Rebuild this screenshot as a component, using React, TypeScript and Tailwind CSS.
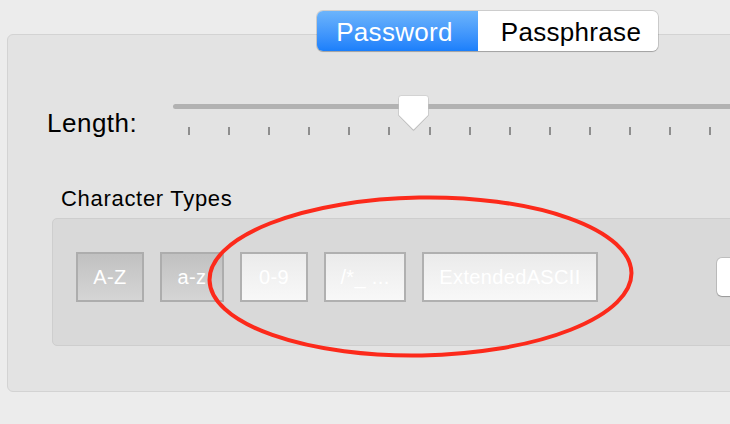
export default function App() {
  const ticks = Array.from({ length: 14 });
  const dark =
    "flex h-[50px] items-center justify-center border-2 border-[#adadad] bg-gradient-to-b from-[#c1c1c1] to-[#d5d5d5] text-[20px] leading-[24px] tracking-[0.35px] text-white";
  const light =
    "flex h-[50px] items-center justify-center border-2 border-[#b0b0b0] bg-gradient-to-b from-[#ebebeb] to-[#f8f8f8] text-[20px] leading-[24px] tracking-[0.35px] text-white";
  return (
    <div className="relative h-[424px] w-[730px] overflow-hidden bg-[#ececec] font-['Liberation_Sans',Arial,sans-serif] text-black">
      <div className="pt-[11px]">
        <div className="relative z-10 ml-[317px] flex h-[40px] w-[341px] rounded-[6px] shadow-[0_0_0_1px_rgba(0,0,0,0.13),0_1px_1px_rgba(0,0,0,0.18)]">
          <div className="w-[161px] rounded-l-[6px] bg-gradient-to-b from-[#6cb4fb] to-[#1a7ffb] pr-[6px] pt-[5px] text-center text-[26px] leading-[33px] tracking-[0.3px] text-white">
            Password
          </div>
          <div className="flex-1 rounded-r-[6px] bg-white pl-[6px] pt-[5px] text-center text-[26px] leading-[33px] tracking-[0.3px]">
            Passphrase
          </div>
        </div>
        <div className="-mt-[17px] ml-[7px] h-[358px] w-[780px] rounded-[6px] border border-[#d3d3d3] bg-[#e3e3e3]">
          <div className="mt-[69px] flex">
            <div className="w-[165px] pl-[39px] pt-[4px] text-[26px] leading-[30px] tracking-[0.5px]">Length:</div>
            <div className="relative flex-1">
              <div className="h-[5px] rounded-full bg-[#b2b2b2]" />
              <div className="mt-[18px] flex gap-[38.1px] pl-[15px]">
                {ticks.map((_, i) => (
                  <div key={i} className="h-[8px] w-[2px] bg-[#8e8e8e]" />
                ))}
              </div>
              <svg
                className="absolute left-[224px] top-[-10px]"
                width="33"
                height="38"
                viewBox="-1 -1 33 38"
              >
                <path
                  d="M3.5 0.5 H27.5 Q30.5 0.5 30.5 3.5 V20 L15.5 35.5 L0.5 20 V3.5 Q0.5 0.5 3.5 0.5 Z"
                  fill="#000"
                  opacity="0.12"
                  transform="translate(0 0.8)"
                />
                <path
                  d="M3.5 0.5 H27.5 Q30.5 0.5 30.5 3.5 V20 L15.5 35 L0.5 20 V3.5 Q0.5 0.5 3.5 0.5 Z"
                  fill="#ffffff"
                  stroke="rgba(0,0,0,0.12)"
                  strokeWidth="1"
                />
              </svg>
            </div>
          </div>
          <div className="ml-[53px] mt-[48px] text-[22px] leading-[26px] tracking-[0.7px]">
            Character Types
          </div>
          <div className="ml-[44px] mt-[6px] flex h-[128px] items-start gap-[16px] rounded-[5px] border border-[#cecece] bg-[#d9d9d9] pl-[23px] pt-[33px]">
            <div className={`${dark} w-[68px]`}>A-Z</div>
            <div className={`${dark} w-[64px]`}>a-z</div>
            <div className={`${light} w-[68px]`}>0-9</div>
            <div className={`${light} w-[82px]`}>/*_ ...</div>
            <div className={`${light} w-[176px]`}>ExtendedASCII</div>
            <div className="ml-[103px] mt-[6px] h-[38px] w-[60px] rounded-[5px] bg-white shadow-[0_0_0_1px_rgba(0,0,0,0.12),0_1px_1px_rgba(0,0,0,0.2)]" />
          </div>
        </div>
      </div>
      <svg
        className="pointer-events-none absolute inset-0"
        width="730"
        height="424"
        viewBox="0 0 730 424"
      >
        <ellipse
          cx="420.5"
          cy="276.5"
          rx="211"
          ry="79"
          fill="none"
          stroke="#fc2a1b"
          strokeWidth="4"
          transform="rotate(-1 420.5 276.5)"
        />
      </svg>
    </div>
  );
}
